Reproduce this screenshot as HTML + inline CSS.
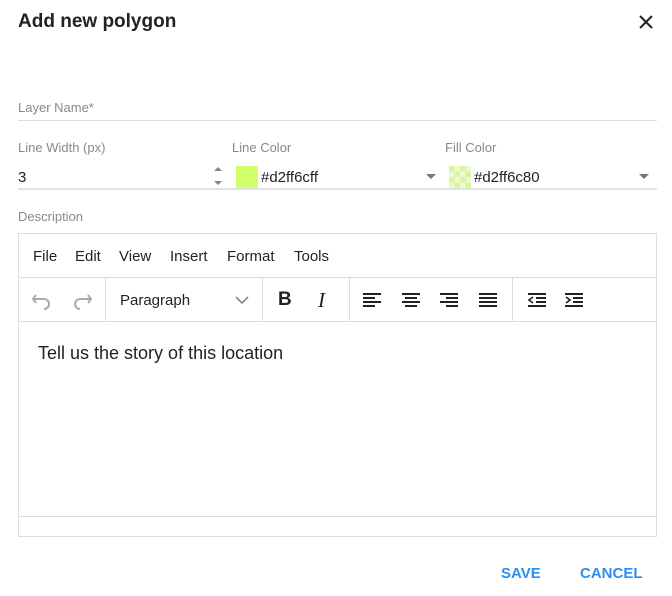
<!DOCTYPE html>
<html><head><style>
body{margin:0;width:672px;height:596px;background:#fff;font-family:"Liberation Sans",sans-serif;position:relative;overflow:hidden}
.a{position:absolute}
.lbl{font-size:13px;color:#888}
.val{font-size:15px;color:#222}
.ul{height:1px;background:#ddd}
.sep{position:absolute;top:0;width:1px;height:43px;background:#ddd}
.ico{position:absolute;top:12px}
</style></head><body>
<div class="a" style="left:18px;top:11px;font-size:19px;font-weight:bold;color:#222">Add new polygon</div>
<svg class="a" style="left:639px;top:15px" width="14" height="14"><path d="M1 1L13 13M13 1L1 13" stroke="#222" stroke-width="2"/></svg>
<div class="a lbl" style="left:18px;top:100px">Layer Name*</div>
<div class="a ul" style="left:18px;top:120px;width:639px"></div>
<div class="a lbl" style="left:18px;top:140px">Line Width (px)</div>
<div class="a lbl" style="left:232px;top:140px">Line Color</div>
<div class="a lbl" style="left:445px;top:140px">Fill Color</div>
<div class="a val" style="left:18px;top:169px">3</div>
<svg class="a" style="left:213px;top:165px" width="10" height="22"><path d="M1 6L5 2L9 6Z M1 16L5 20L9 16Z" fill="#888"/></svg>
<div class="a" style="left:236px;top:166px;width:22px;height:22px;background:#d2ff6c"></div>
<div class="a val" style="left:261px;top:169px">#d2ff6cff</div>
<svg class="a" style="left:426px;top:174px" width="10" height="6"><path d="M0 0H10L5 5Z" fill="#777"/></svg>
<svg class="a" style="left:449px;top:166px" width="22" height="22"><rect width="22" height="22" fill="#eef7d6"/><g fill="#d9f59a"><rect x="0" y="0" width="5.5" height="5.5"/><rect x="11" y="0" width="5.5" height="5.5"/><rect x="5.5" y="5.5" width="5.5" height="5.5"/><rect x="16.5" y="5.5" width="5.5" height="5.5"/><rect x="0" y="11" width="5.5" height="5.5"/><rect x="11" y="11" width="5.5" height="5.5"/><rect x="5.5" y="16.5" width="5.5" height="5.5"/><rect x="16.5" y="16.5" width="5.5" height="5.5"/></g></svg>
<div class="a val" style="left:474px;top:169px">#d2ff6c80</div>
<svg class="a" style="left:639px;top:174px" width="10" height="6"><path d="M0 0H10L5 5Z" fill="#777"/></svg>
<div class="a" style="left:18px;top:188px;width:639px;height:2px;background:#e2e2e2"></div>
<div class="a lbl" style="left:18px;top:209px">Description</div>
<div class="a" style="left:18px;top:233px;width:637px;height:302px;border:1px solid #ddd">
 <div class="a" style="left:0;top:0;width:637px;height:43px;border-bottom:1px solid #ddd;font-size:15px;color:#222">
  <span class="a" style="left:14px;top:14px">File</span><span class="a" style="left:56px;top:14px">Edit</span><span class="a" style="left:100px;top:14px">View</span><span class="a" style="left:151px;top:14px">Insert</span><span class="a" style="left:208px;top:14px">Format</span><span class="a" style="left:275px;top:14px">Tools</span>
 </div>
 <div class="a" style="left:0;top:44px;width:637px;height:43px;border-bottom:1px solid #ddd">
  <svg class="ico" style="left:12px" width="22" height="20"><path d="M5 5L2 9L5 13M2 9H13A5 5 0 0 1 13 19" fill="none" stroke="#aaa" stroke-width="2"/></svg>
  <svg class="ico" style="left:52px" width="22" height="20"><path d="M17 5L20 9L17 13M20 9H9A5 5 0 0 0 9 19" fill="none" stroke="#aaa" stroke-width="2"/></svg>
  <div class="sep" style="left:86px"></div>
  <span class="a" style="left:101px;top:14px;font-size:15px;color:#222">Paragraph</span>
  <svg class="ico" style="left:216px;top:18px" width="14" height="9"><path d="M1 1L7 7L13 1" fill="none" stroke="#888" stroke-width="1.6"/></svg>
  <div class="sep" style="left:243px"></div>
  <span class="a" style="left:259px;top:11px;font-size:19px;font-weight:bold;color:#222">B</span>
  <span class="a" style="left:299px;top:10px;font-size:21px;font-style:italic;font-family:'Liberation Serif',serif;color:#222">I</span>
  <div class="sep" style="left:330px"></div>
  <svg class="ico" style="left:344px;top:14px" width="18" height="16"><path d="M0 2H18M0 6H12M0 10H18M0 14H12" stroke="#222" stroke-width="2"/></svg>
  <svg class="ico" style="left:383px;top:14px" width="18" height="16"><path d="M0 2H18M3 6H15M0 10H18M3 14H15" stroke="#222" stroke-width="2"/></svg>
  <svg class="ico" style="left:421px;top:14px" width="18" height="16"><path d="M0 2H18M6 6H18M0 10H18M6 14H18" stroke="#222" stroke-width="2"/></svg>
  <svg class="ico" style="left:460px;top:14px" width="18" height="16"><path d="M0 2H18M0 6H18M0 10H18M0 14H18" stroke="#222" stroke-width="2"/></svg>
  <div class="sep" style="left:493px"></div>
  <svg class="ico" style="left:509px;top:14px" width="18" height="16"><path d="M0 2H18M8 6H18M8 10H18M0 14H18" stroke="#222" stroke-width="2"/><path d="M5 5L1 8L5 11" fill="none" stroke="#222" stroke-width="1.6"/></svg>
  <svg class="ico" style="left:546px;top:14px" width="18" height="16"><path d="M0 2H18M8 6H18M8 10H18M0 14H18" stroke="#222" stroke-width="2"/><path d="M1 5L5 8L1 11" fill="none" stroke="#222" stroke-width="1.6"/></svg>
 </div>
 <span class="a" style="left:19px;top:109px;font-size:18px;color:#222">Tell us the story of this location</span>
 <div class="a" style="left:0;top:282px;width:637px;height:1px;background:#ddd"></div>
</div>
<div class="a" style="left:501px;top:565px;font-size:15px;font-weight:bold;color:#2a8ff0">SAVE</div>
<div class="a" style="left:580px;top:565px;font-size:15px;font-weight:bold;color:#2a8ff0">CANCEL</div>
</body></html>
